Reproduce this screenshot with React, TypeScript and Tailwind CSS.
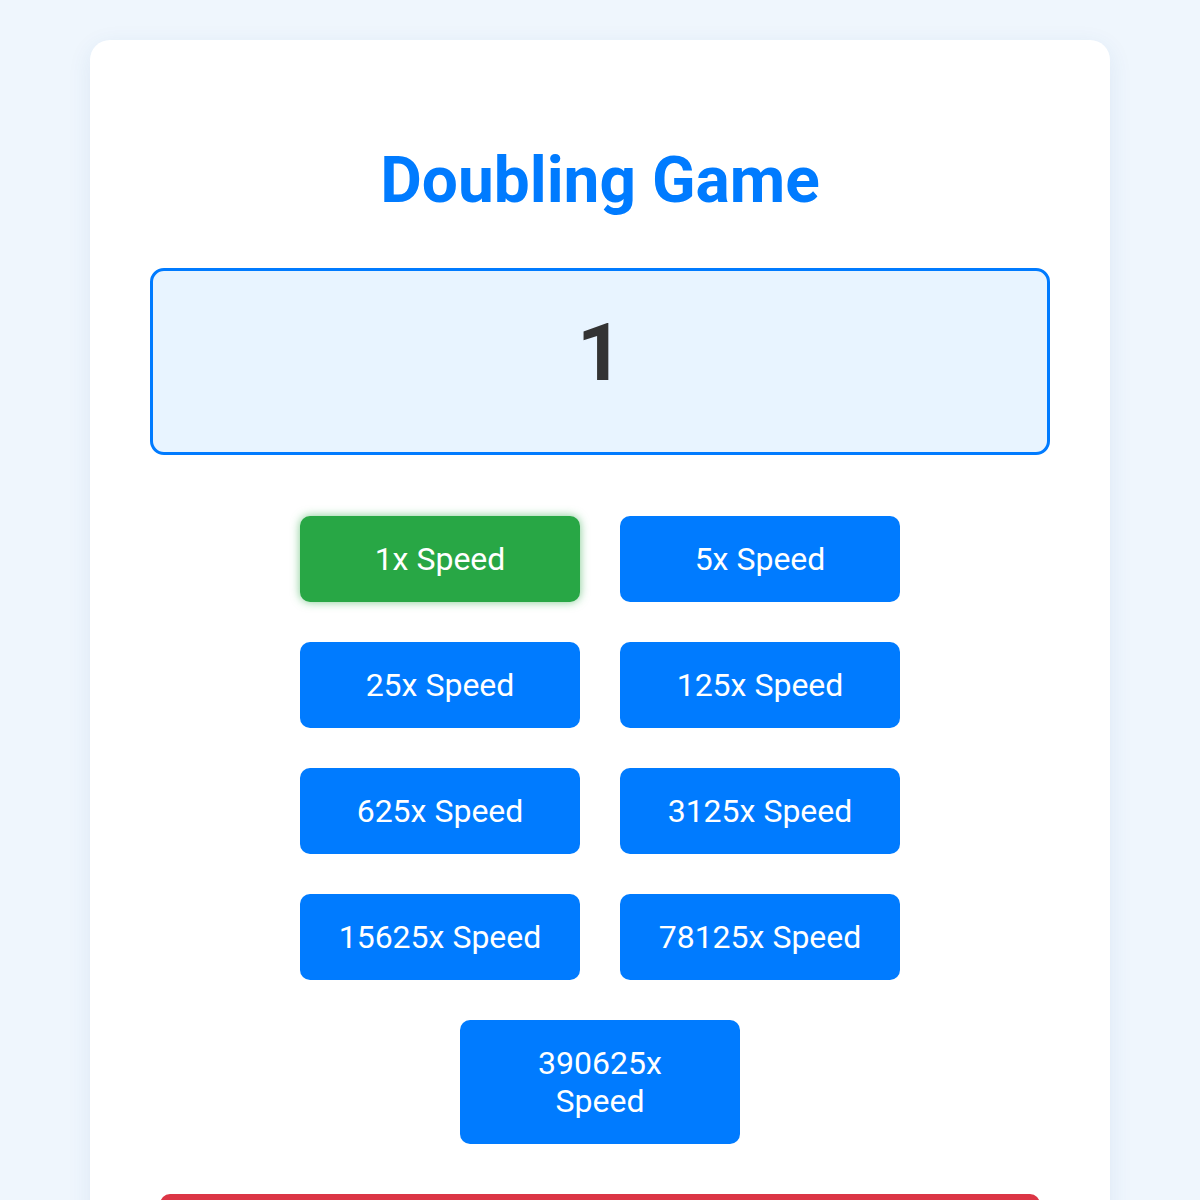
import React from "react";

const speeds = [1, 5, 25, 125, 625, 3125, 15625, 78125, 390625];

export default function App() {
  return (
    <div
      className="min-h-[1200px] w-full bg-[#eff6fd] pt-10 pb-10"
      style={{ fontFamily: "Roboto, 'Liberation Sans', sans-serif" }}
    >
      <div className="mx-[90px] rounded-[20px] bg-white p-[60px] shadow-[0_6px_24px_rgba(30,90,160,0.09)]">
        <h1 className="mt-[43px] text-center text-[64px] font-bold leading-[75px] text-[#007bff]">
          Doubling Game
        </h1>
        <div className="mt-[50px] flex h-[187px] justify-center rounded-[14px] border-[3px] border-[#007bff] bg-[#e8f4ff] pt-[35px]">
          <span className="text-[80px] font-bold leading-[94px] text-[#333333]">1</span>
        </div>
        <div className="mx-auto mt-[61px] flex w-[600px] flex-wrap justify-center gap-10">
          {speeds.map((s, i) => (
            <button
              key={s}
              className={
                i === 0
                  ? "w-[280px] rounded-[10px] bg-[#28a745] px-[32px] py-[24px] text-[32px] leading-[38px] text-white shadow-[0_0_10px_rgba(40,167,69,0.6)]"
                  : "w-[280px] rounded-[10px] bg-[#007bff] px-[32px] py-[24px] text-[32px] leading-[38px] text-white"
              }
            >
              {s}x Speed
            </button>
          ))}
        </div>
        <button className="mx-[10px] mt-[50px] block w-[880px] rounded-[10px] bg-[#dc3545] py-[24px] text-[32px] leading-[38px] text-white">
          Reset
        </button>
      </div>
    </div>
  );
}
